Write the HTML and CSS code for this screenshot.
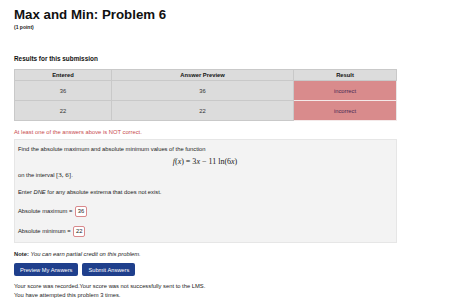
FILE: index.html
```html
<!DOCTYPE html>
<html lang="en">
<head>
    <meta charset="UTF-8">
    <title>Max and Min: Problem 6</title>
    <link rel="stylesheet" href="styles.css">
</head>
<body>
    <header>
        <h1>Max and Min: Problem 6</h1>
        <div class="points">(1 point)</div>
    </header>

    <main>
        <h2>Results for this submission</h2>
        <table class="results">
            <tr>
                <th class="col-entered">Entered</th>
                <th class="col-preview">Answer Preview</th>
                <th class="col-result">Result</th>
            </tr>
            <tr>
                <td>36</td>
                <td>36</td>
                <td class="incorrect">incorrect</td>
            </tr>
            <tr>
                <td>22</td>
                <td>22</td>
                <td class="incorrect">incorrect</td>
            </tr>
        </table>
        <p class="warning">At least one of the answers above is NOT correct.</p>

        <div class="problem">
            <p>Find the absolute maximum and absolute minimum values of the function</p>
            <div class="formula"><i>f</i>(<i>x</i>) = 3<i>x</i> &minus; 11 ln(6<i>x</i>)</div>
            <p>on the interval <span class="math">[3, 6]</span>.</p>
            <p class="gap">Enter <i>DNE</i> for any absolute extrema that does not exist.</p>
            <p class="answer">Absolute maximum = <span class="field">36</span></p>
            <p class="answer">Absolute minimum = <span class="field">22</span></p>
        </div>

        <p class="note"><b>Note:</b> <i>You can earn partial credit on this problem.</i></p>

        <div class="buttons">
            <button class="btn">Preview My Answers</button>
            <button class="btn">Submit Answers</button>
        </div>

        <div class="status">
            <div>Your score was recorded.Your score was not successfully sent to the LMS.</div>
            <div>You have attempted this problem 3 times.</div>
        </div>
    </main>
</body>
</html>
```

FILE: styles.css
```css
body {
    margin: 0;
    padding: 0 14px;
    font-family: "Liberation Sans", Arial, sans-serif;
    font-size: 5.8px;
    color: #222;
    background: #fff;
}

header h1 {
    margin: 7px 0 0 0;
    font-size: 13.3px;
    line-height: 16px;
    font-weight: bold;
    color: #111;
}

.points {
    font-size: 5px;
    font-weight: bold;
    line-height: 7px;
    margin-top: 1px;
}

main {
    width: 383px;
}

h2 {
    margin: 24px 0 0 0;
    font-size: 6.4px;
    line-height: 8px;
    font-weight: bold;
    color: #111;
}

.results {
    margin-top: 6px;
    width: 383px;
    border-collapse: collapse;
    font-size: 5.8px;
}

.results th,
.results td {
    border: 1px solid #c9c9c9;
    background: #dcdcdc;
    text-align: center;
    color: #333;
}

.results th {
    height: 10px;
    padding: 0;
    font-weight: bold;
    color: #111;
}

.results td {
    height: 19px;
    padding: 0;
}

.col-entered { width: 96px; }
.col-preview { width: 181px; }

.results td.incorrect {
    background: #d98b8c;
    color: #4a2a55;
    border-color: #f4e9e9;
    border-right-color: #e8e8e8;
}

.warning {
    margin: 7px 0 0 0;
    line-height: 8px;
    color: #c84a4e;
}

.problem {
    margin-top: 3px;
    background: #f3f3f3;
    border: 1px solid #e6e6e6;
    padding: 5px 4px 5px 3px;
    color: #222;
}

.problem p {
    margin: 0;
    line-height: 8px;
}

.formula {
    text-align: center;
    font-family: "Liberation Serif", "Times New Roman", serif;
    font-size: 8px;
    line-height: 10px;
    margin: 4px 0 4px 0;
}

.math {
    font-family: "Liberation Serif", "Times New Roman", serif;
    font-size: 7px;
}

.problem p.gap {
    margin-top: 9px;
}

.problem p.answer {
    margin-top: 9px;
    line-height: 12px;
}

.problem p.answer + p.answer {
    margin-top: 8px;
}

.field {
    display: inline-block;
    width: 10px;
    height: 9px;
    line-height: 9px;
    border: 1px solid #d9898c;
    border-radius: 2px;
    background: #fff;
    text-align: center;
    vertical-align: middle;
    margin-left: 1px;
}

.note {
    margin: 7px 0 0 0;
    line-height: 8px;
}

.buttons {
    display: flex;
    gap: 4px;
    margin-top: 5px;
}

.btn {
    height: 13px;
    padding: 0 6px;
    border: none;
    border-radius: 2px;
    background: #1f3f8c;
    color: #fff;
    font-family: "Liberation Sans", Arial, sans-serif;
    font-size: 5.7px;
}

.status {
    margin-top: 6px;
    line-height: 8.5px;
}
```
